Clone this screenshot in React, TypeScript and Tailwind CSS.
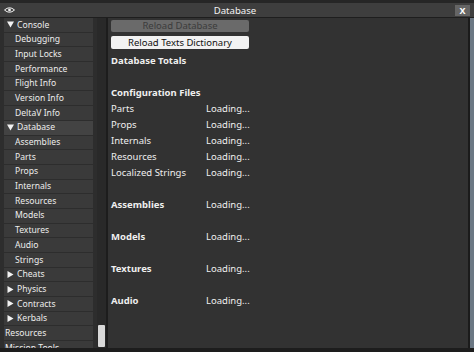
import React from 'react'

const tree = [
  { label: 'Console', kind: 'open' },
  { label: 'Debugging', kind: 'child' },
  { label: 'Input Locks', kind: 'child' },
  { label: 'Performance', kind: 'child' },
  { label: 'Flight Info', kind: 'child' },
  { label: 'Version Info', kind: 'child' },
  { label: 'DeltaV Info', kind: 'child' },
  { label: 'Database', kind: 'open', active: true },
  { label: 'Assemblies', kind: 'child' },
  { label: 'Parts', kind: 'child' },
  { label: 'Props', kind: 'child' },
  { label: 'Internals', kind: 'child' },
  { label: 'Resources', kind: 'child' },
  { label: 'Models', kind: 'child' },
  { label: 'Textures', kind: 'child' },
  { label: 'Audio', kind: 'child' },
  { label: 'Strings', kind: 'child' },
  { label: 'Cheats', kind: 'closed' },
  { label: 'Physics', kind: 'closed' },
  { label: 'Contracts', kind: 'closed' },
  { label: 'Kerbals', kind: 'closed' },
  { label: 'Resources', kind: 'leaf' },
  { label: 'Mission Tools', kind: 'leaf' },
]

const configRows = ['Parts', 'Props', 'Internals', 'Resources', 'Localized Strings']
const sections = ['Assemblies', 'Models', 'Textures', 'Audio']

function Arrow({ open }: { open: boolean }) {
  return (
    <svg width="7" height="7" viewBox="0 0 7 7" className="shrink-0">
      {open ? <path d="M0 0.5 L7 0.5 L3.5 6.5 Z" fill="#f2f2f2" /> : <path d="M0.5 0 L6.5 3.5 L0.5 7 Z" fill="#f2f2f2" />}
    </svg>
  )
}

function TreeRow({ item }: { item: (typeof tree)[number] }) {
  const isHeader = item.kind === 'open' || item.kind === 'closed'
  return (
    <div
      className={
        'h-[13.7px] shrink-0 flex items-center ' +
        (item.active ? 'bg-[#434343] ' : 'bg-[#3a3a3a] ') +
        (item.kind === 'leaf' ? 'pl-[1px]' : isHeader ? 'pl-[3px]' : 'pl-[11px]')
      }
    >
      {isHeader && <Arrow open={item.kind === 'open'} />}
      <span className={'text-[8.6px] leading-none text-[#ededed] ' + (isHeader ? 'ml-[3px]' : '')}>{item.label}</span>
    </div>
  )
}

function Row({ label, value, bold }: { label: string; value?: string; bold?: boolean }) {
  return (
    <div className="h-[16px] flex items-center text-[9.5px] text-[#efefef]">
      <span className={'w-[95px] ' + (bold ? 'font-bold' : '')}>{label}</span>
      {value && <span>{value}</span>}
    </div>
  )
}

export default function App() {
  return (
    <div
      className="w-[474px] h-[352px] bg-[#1c1c1c] overflow-hidden flex flex-col"
      style={{ fontFamily: '"Noto Sans", "Open Sans", sans-serif' }}
    >
      {/* top edge */}
      <div className="h-[3px] bg-[#262626] shrink-0" />

      {/* title bar */}
      <div className="h-[14px] shrink-0 flex items-center bg-[#3e3e3e] relative">
        <div className="w-[18px] h-full flex items-center justify-center">
          <svg width="11" height="6" viewBox="0 0 11 6">
            <path d="M0.5 3 Q5.5 -1.5 10.5 3 Q5.5 7.5 0.5 3 Z" fill="none" stroke="#f0f0f0" strokeWidth="1" />
            <circle cx="5.5" cy="3" r="1.4" fill="#f0f0f0" />
          </svg>
        </div>
        <div className="flex-1 text-center text-[9.6px] leading-none text-[#f2f2f2] pt-px">Database</div>
        <div className="w-[15px] h-[11px] ml-[3px] mr-[4px] bg-[#656565] flex items-center justify-center text-[9px] font-bold leading-none text-white">
          X
        </div>
      </div>
      <div className="h-px bg-[#1e1e1e] shrink-0" />

      {/* body */}
      <div className="h-[330px] shrink-0 flex">
        {/* sidebar */}
        <div className="w-[97px] bg-[#2d2d2d] pl-[4px] pr-[4px] overflow-hidden flex flex-col gap-px">
          {tree.map((item, i) => (
            <TreeRow key={i} item={item} />
          ))}
        </div>

        {/* scrollbar */}
        <div className="w-[9px] bg-[#292929] flex flex-col justify-end pb-[1px]">
          <div className="h-[22px] mx-[1px] bg-[#d9d9d9] rounded-[1px]" />
        </div>
        <div className="w-[2px] bg-[#1d1d1d]" />

        {/* content */}
        <div className="flex-1 bg-[#323232] pl-[3px] pt-[2px]">
          <div className="w-[138px] h-[12px] bg-[#6a6a6a] rounded-[2px] flex items-center justify-center text-[9.5px] leading-none text-[#3c3c3c]">
            Reload Database
          </div>
          <div className="w-[138px] h-[13px] mt-[4px] bg-[#f2f2f2] rounded-[2px] flex items-center justify-center text-[9.5px] leading-none text-[#111]">
            Reload Texts Dictionary
          </div>
          <div className="mt-[4px]">
            <Row label="Database Totals" bold />
            <div className="h-[16px]" />
            <Row label="Configuration Files" bold />
            {configRows.map((r) => (
              <Row key={r} label={r} value="Loading..." />
            ))}
            {sections.map((s) => (
              <div key={s}>
                <div className="h-[16px]" />
                <Row label={s} value="Loading..." bold />
              </div>
            ))}
          </div>
        </div>

        {/* right edge */}
        <div className="w-[2px] bg-[#1b1b1b]" />
        <div className="w-[4px] bg-[#6b7783]" />
      </div>

      <div className="flex-1 bg-[#1d1d1d]" />
    </div>
  )
}
